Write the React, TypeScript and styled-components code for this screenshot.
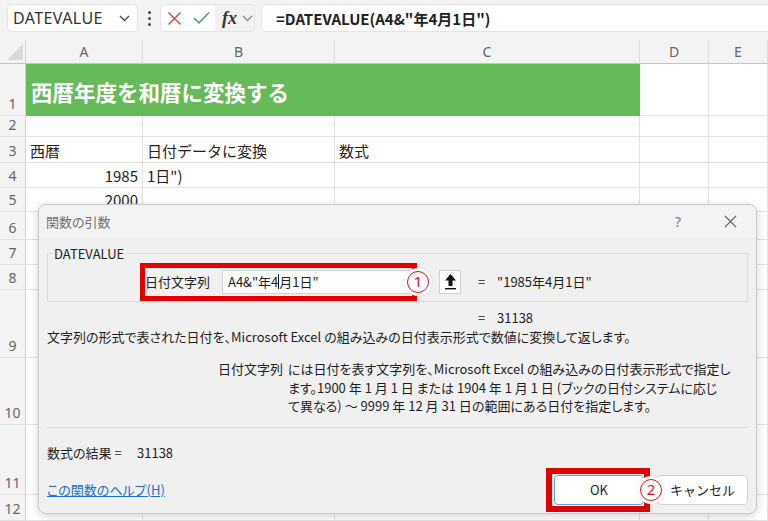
import React from "react";
import styled, { createGlobalStyle } from "styled-components";

const GlobalStyle = createGlobalStyle`
  html, body { margin: 0; padding: 0; background: #ffffff; }
  body {
    font-family: "Noto Sans CJK JP", "Noto Sans", sans-serif;
    color: #222;
    overflow: hidden;
  }
  * { box-sizing: border-box; }
`;

const Page = styled.div`
  position: relative;
  width: 768px;
  height: 521px;
  overflow: hidden;
  background: #ffffff;
`;

/* ---------- Formula bar ---------- */
const FormulaBar = styled.div`
  display: flex;
  align-items: flex-start;
  height: 40px;
  padding: 4px 0 0 7px;
  background: #f3f3f3;
`;

const NameBox = styled.div`
  width: 131px;
  height: 28px;
  display: flex;
  align-items: center;
  justify-content: space-between;
  padding: 0 7px 0 5px;
  background: #fff;
  border: 1px solid #e4e4e4;
  border-radius: 5px;
  font-family: "Noto Sans", sans-serif;
  font-size: 16px;
  letter-spacing: 0.4px;
  color: #333;
`;

const Dots = styled.div`
  width: 22px;
  height: 28px;
  display: flex;
  flex-direction: column;
  align-items: center;
  justify-content: center;
  gap: 3px;
`;

const Dot = styled.span`
  width: 3px;
  height: 3px;
  border-radius: 50%;
  background: #444;
`;

const EditBox = styled.div`
  width: 95px;
  height: 28px;
  display: flex;
  align-items: center;
  background: #fff;
  border: 1px solid #e4e4e4;
  border-radius: 5px;
  overflow: hidden;
`;

const EditIcon = styled.span`
  width: 27px;
  height: 100%;
  display: flex;
  align-items: center;
  justify-content: center;
`;

const FxPart = styled.div`
  flex: 1;
  height: 100%;
  display: flex;
  align-items: center;
  gap: 5px;
  padding-left: 7px;
  background: #f2f2f2;
`;

const Fx = styled.span`
  font-family: "Liberation Serif", serif;
  font-style: italic;
  font-weight: bold;
  font-size: 18px;
  color: #333;
  line-height: 1;
`;

const FormulaBox = styled.div`
  flex: 1;
  height: 28px;
  margin-left: 6px;
  display: flex;
  align-items: center;
  padding-left: 14px;
  background: #fff;
  border: 1px solid #e4e4e4;
  border-right: none;
  border-radius: 5px 0 0 5px;
  font-size: 15px;
  font-weight: bold;
  color: #222;
  white-space: nowrap;
`;

/* ---------- Sheet grid ---------- */
const Sheet = styled.div`
  display: grid;
  grid-template-columns: 26px 117px 192px 305px 69px 59px;
  grid-template-rows: 24px 52px 21px 26px 25px 24px 28px 25px 25px 68px 67px 70px 26px;
`;

const Corner = styled.div`
  background: #f3f3f3;
  border-right: 1px solid #d4d4d4;
  border-bottom: 1px solid #c4c4c4;
  display: flex;
  align-items: flex-end;
  justify-content: flex-end;
  padding: 0 2px 3px 0;
`;

const ColHead = styled.div`
  background: #f3f3f3;
  border-right: 1px solid #dedede;
  border-bottom: 1px solid #c4c4c4;
  display: flex;
  align-items: center;
  justify-content: center;
  font-family: "Noto Sans", sans-serif;
  font-size: 14px;
  color: #666;
`;

const RowHead = styled.div`
  background: #f3f3f3;
  border-right: 1px solid #d4d4d4;
  border-bottom: 1px solid #e0e0e0;
  display: flex;
  align-items: flex-end;
  justify-content: center;
  font-family: "Noto Sans", sans-serif;
  font-size: 14px;
  line-height: 22px;
  color: #666;
`;

const Cell = styled.div<{ $align?: "left" | "right" }>`
  border-right: 1px solid #e2e2e2;
  border-bottom: 1px solid #e2e2e2;
  display: flex;
  align-items: flex-end;
  justify-content: ${(p) => (p.$align === "right" ? "flex-end" : "flex-start")};
  padding: 0 4px;
  font-size: 15px;
  line-height: 23px;
  color: #222;
  white-space: nowrap;
  overflow: hidden;
`;

const TitleCell = styled.div<{ $span: number }>`
  grid-column: span ${(p) => p.$span};
  background: #66ba5a;
  display: flex;
  align-items: center;
  padding: 2px 5px 0;
  font-size: 21.5px;
  font-weight: bold;
  color: #fff;
  white-space: nowrap;
`;

/* ---------- Dialog ---------- */
const Dialog = styled.div`
  position: absolute;
  left: 38px;
  top: 204px;
  width: 719px;
  height: 310px;
  background: #f0f0f0;
  border: 1px solid #c9c9c9;
  border-radius: 8px;
  box-shadow: 0 2px 10px rgba(0, 0, 0, 0.18);
  font-size: 13px;
  font-feature-settings: "palt";
  color: #1e1e1e;
  overflow: hidden;
`;

const TitleBar = styled.div`
  height: 32px;
  display: flex;
  align-items: center;
  justify-content: space-between;
  padding: 0 0 0 7px;
  background: #f3f3f3;
`;

const DialogTitle = styled.span`
  color: #707070;
  font-size: 13px;
`;

const TitleButtons = styled.div`
  display: flex;
  align-items: center;
  height: 100%;
`;

const TitleButton = styled.span`
  width: 52px;
  height: 100%;
  display: flex;
  align-items: center;
  justify-content: center;
  color: #777;
  font-family: "Noto Sans", sans-serif;
  font-size: 14px;
`;

const Body = styled.div`
  padding: 0 8px;
`;

const Group = styled.fieldset`
  margin: 8px 0 0;
  padding: 0;
  min-width: 0;
  border: 1px solid #dadada;
`;

const Legend = styled.legend`
  margin-left: 4px;
  padding: 0 2px;
  font-size: 13px;
  line-height: 17px;
  color: #222;
`;

const ArgRow = styled.div`
  display: flex;
  align-items: center;
  padding-left: 92px;
  height: 39px;
`;

const Highlight = styled.div`
  position: relative;
  display: flex;
  align-items: center;
  border: 5px solid #e00000;
`;

const ArgLabel = styled.span`
  width: 77px;
  line-height: 28px;
  font-size: 13px;
`;

const ArgInput = styled.div`
  width: 190px;
  height: 24px;
  display: flex;
  align-items: center;
  padding-left: 5px;
  background: #fff;
  border: 1px solid #d0d0d0;
  border-right: none;
  font-size: 13px;
  white-space: nowrap;
`;

const Caret = styled.span`
  display: inline-block;
  width: 1px;
  height: 15px;
  background: #111;
`;

const Badge = styled.div<{ $right: number }>`
  position: absolute;
  top: 50%;
  right: ${(p) => p.$right}px;
  transform: translateY(-50%);
  width: 28px;
  height: 28px;
  border-radius: 50%;
  background: #fff;
  box-shadow: 0 0 2px rgba(0, 0, 0, 0.15);
  display: flex;
  align-items: center;
  justify-content: center;
`;

const BadgeRing = styled.span`
  width: 22px;
  height: 22px;
  border-radius: 50%;
  border: 1.7px solid #e01010;
  display: flex;
  align-items: center;
  justify-content: center;
  color: #e01010;
  font-family: "Noto Sans", sans-serif;
  font-size: 15px;
  line-height: 1;
`;

const RefButton = styled.div`
  width: 22px;
  height: 24px;
  margin-left: 22px;
  display: flex;
  align-items: center;
  justify-content: center;
  background: #fff;
  border: 1px solid #d0d0d0;
`;

const Eq = styled.span`
  width: 19px;
  font-size: 13px;
`;

const Value = styled.span`
  font-size: 13px;
  white-space: nowrap;
`;

const ArgEq = styled(Eq)`
  margin-left: 17px;
`;

const TextLine = styled.div`
  height: 17px;
  line-height: 17px;
  white-space: nowrap;
`;

const HelpLine = styled.div`
  height: 18.5px;
  line-height: 18.5px;
  white-space: nowrap;
`;

const ResultLine = styled(TextLine)`
  margin-top: 7px;
  padding-left: 431px;
  display: flex;
`;

const Description = styled(TextLine)`
  margin-top: 2px;
`;

const ArgHelp = styled.div`
  margin-top: 15px;
  display: grid;
  grid-template-columns: 236px 1fr;
  column-gap: 5px;
`;

const ArgHelpLabel = styled(HelpLine)`
  text-align: right;
`;

const ArgHelpText = styled.div`
  display: flex;
  flex-direction: column;
`;

const Separator = styled.div`
  margin-top: 11px;
  height: 1px;
  background: #dcdcdc;
`;

const FormulaResult = styled(TextLine)`
  margin-top: 16px;
  display: flex;
`;

const ResultLabel = styled.span`
  width: 90px;
`;

const Footer = styled.div`
  margin-top: 7px;
  display: flex;
  align-items: center;
  justify-content: space-between;
`;

const HelpLink = styled.a`
  color: #1b6fc8;
  text-decoration: underline;
  font-size: 13px;
  line-height: 17px;
`;

const Buttons = styled.div`
  display: flex;
  align-items: center;
  gap: 7px;
`;

const ButtonHighlight = styled.div`
  position: relative;
  display: flex;
  border: 6px solid #e00000;
  padding: 1px 0 1px 2px;
`;

const Button = styled.button<{ $primary?: boolean }>`
  width: ${(p) => (p.$primary ? 90 : 91)}px;
  height: 30px;
  background: #fff;
  border: 1px solid ${(p) => (p.$primary ? "#6aa2d8" : "#d2d2d2")};
  border-radius: 4px;
  font-family: "Noto Sans CJK JP", "Noto Sans", sans-serif;
  font-size: 13px;
  color: #1e1e1e;
  padding: 0;
`;

const ChevronDown = ({ color = "#555" }: { color?: string }) => (
  <svg width="11" height="7" viewBox="0 0 11 7">
    <polyline points="1,1 5.5,5.5 10,1" fill="none" stroke={color} strokeWidth="1.3" />
  </svg>
);

export default function App() {
  const cols = ["A", "B", "C", "D", "E"];
  return (
    <Page>
      <GlobalStyle />
      <FormulaBar>
        <NameBox>
          <span>DATEVALUE</span>
          <ChevronDown color="#444" />
        </NameBox>
        <Dots>
          <Dot />
          <Dot />
          <Dot />
        </Dots>
        <EditBox>
          <EditIcon>
            <svg width="15" height="15" viewBox="0 0 15 15">
              <path d="M1.5 1.5 L13.5 13.5 M13.5 1.5 L1.5 13.5" stroke="#e4473f" strokeWidth="1.5" />
            </svg>
          </EditIcon>
          <EditIcon>
            <svg width="17" height="14" viewBox="0 0 17 14">
              <polyline points="1,7 6,12 16,1.5" fill="none" stroke="#3fa45e" strokeWidth="1.5" />
            </svg>
          </EditIcon>
          <FxPart>
            <Fx>fx</Fx>
            <ChevronDown color="#888" />
          </FxPart>
        </EditBox>
        <FormulaBox>=DATEVALUE(A4&amp;"年4月1日")</FormulaBox>
      </FormulaBar>

      <Sheet>
        <Corner>
          <svg width="16" height="16" viewBox="0 0 16 16">
            <polygon points="16,0 16,16 0,16" fill="#d9d9d9" />
          </svg>
        </Corner>
        {cols.map((c) => (
          <ColHead key={c}>{c}</ColHead>
        ))}

        <RowHead>1</RowHead>
        <TitleCell $span={3}>西暦年度を和暦に変換する</TitleCell>
        <Cell />
        <Cell />

        <RowHead>2</RowHead>
        <Cell />
        <Cell />
        <Cell />
        <Cell />
        <Cell />

        <RowHead>3</RowHead>
        <Cell>西暦</Cell>
        <Cell>日付データに変換</Cell>
        <Cell>数式</Cell>
        <Cell />
        <Cell />

        <RowHead>4</RowHead>
        <Cell $align="right">1985</Cell>
        <Cell>1日")</Cell>
        <Cell />
        <Cell />
        <Cell />

        <RowHead>5</RowHead>
        <Cell $align="right">2000</Cell>
        <Cell />
        <Cell />
        <Cell />
        <Cell />

        {[6, 7, 8, 9, 10, 11, 12].map((r) => (
          <React.Fragment key={r}>
            <RowHead>{r}</RowHead>
            <Cell />
            <Cell />
            <Cell />
            <Cell />
            <Cell />
          </React.Fragment>
        ))}
      </Sheet>

      <Dialog>
        <TitleBar>
          <DialogTitle>関数の引数</DialogTitle>
          <TitleButtons>
            <TitleButton>?</TitleButton>
            <TitleButton>
              <svg width="13" height="13" viewBox="0 0 13 13">
                <path d="M1 1 L12 12 M12 1 L1 12" stroke="#666" strokeWidth="1.1" />
              </svg>
            </TitleButton>
          </TitleButtons>
        </TitleBar>
        <Body>
          <Group>
            <Legend>DATEVALUE</Legend>
            <ArgRow>
              <Highlight>
                <ArgLabel>日付文字列</ArgLabel>
                <ArgInput>
                  A4&amp;"年4<Caret />月1日"
                </ArgInput>
                <Badge $right={-20}>
                  <BadgeRing>1</BadgeRing>
                </Badge>
              </Highlight>
              <RefButton>
                <svg width="13" height="17" viewBox="0 0 13 17">
                  <path d="M6.5 1 L1 7.5 H4.5 V13 H8.5 V7.5 H12 Z" fill="#111" />
                  <rect x="1" y="15" width="11" height="1.4" fill="#111" />
                </svg>
              </RefButton>
              <ArgEq>=</ArgEq>
              <Value>"1985年4月1日"</Value>
            </ArgRow>
          </Group>
          <ResultLine>
            <Eq>=</Eq>
            <Value>31138</Value>
          </ResultLine>
          <Description>
            文字列の形式で表された日付を、Microsoft Excel の組み込みの日付表示形式で数値に変換して返します。
          </Description>
          <ArgHelp>
            <ArgHelpLabel>日付文字列</ArgHelpLabel>
            <ArgHelpText>
              <HelpLine>には日付を表す文字列を、Microsoft Excel の組み込みの日付表示形式で指定し</HelpLine>
              <HelpLine>ます。1900 年 1 月 1 日 または 1904 年 1 月 1 日 (ブックの日付システムに応じ</HelpLine>
              <HelpLine>て異なる) ～ 9999 年 12 月 31 日の範囲にある日付を指定します。</HelpLine>
            </ArgHelpText>
          </ArgHelp>
          <Separator />
          <FormulaResult>
            <ResultLabel>数式の結果 =</ResultLabel>
            <span>31138</span>
          </FormulaResult>
          <Footer>
            <HelpLink>この関数のヘルプ(H)</HelpLink>
            <Buttons>
              <ButtonHighlight>
                <Button $primary>OK</Button>
                <Badge $right={-21}>
                  <BadgeRing>2</BadgeRing>
                </Badge>
              </ButtonHighlight>
              <Button>キャンセル</Button>
            </Buttons>
          </Footer>
        </Body>
      </Dialog>
    </Page>
  );
}
